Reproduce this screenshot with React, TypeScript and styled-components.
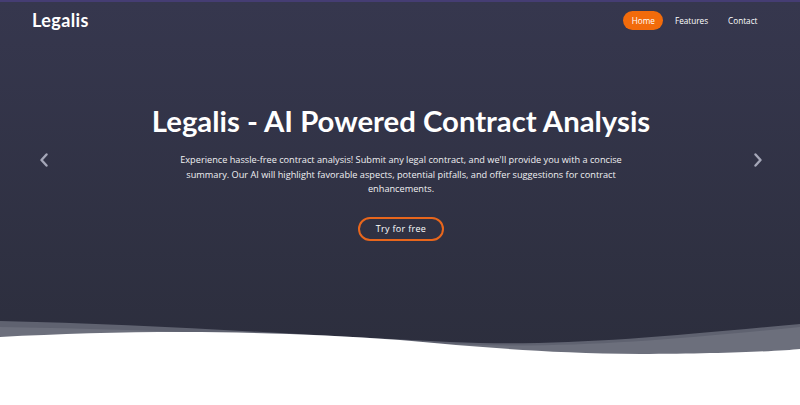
import React from 'react';
import styled, { createGlobalStyle } from 'styled-components';

const GlobalStyle = createGlobalStyle`
    * {
        box-sizing: border-box;
    }
    body {
        margin: 0;
        background: #ffffff;
        font-family: "Open Sans", "Liberation Sans", sans-serif;
    }
`

const Hero = styled.section`
    position: relative;
    height: 355px;
    border-top: 2px solid #453d73;
    background: linear-gradient(180deg, #36374e 0%, #2c2e3d 100%);
    display: flex;
    flex-direction: column;
    overflow: hidden;
`

const Header = styled.header`
    display: flex;
    align-items: center;
    justify-content: space-between;
    padding: 0 34px 0 32px;
    height: 36px;
`

const Logo = styled.a`
    font-family: Lato, "Open Sans", sans-serif;
    font-weight: 700;
    font-size: 18px;
    color: #ffffff;
    letter-spacing: 0.4px;
    text-decoration: none;
`

const Nav = styled.nav`
    display: flex;
    align-items: center;
`

const NavLink = styled.a<{ $active?: boolean }>`
    font-size: 8.2px;
    color: #ffffff;
    text-decoration: none;
    padding: 4px 8.5px;
    margin-left: 3px;
    border-radius: 50px;
    background: ${p => (p.$active ? '#f26b0b' : 'transparent')};
`

const Slide = styled.div`
    height: 244px;
    display: flex;
    align-items: center;
    justify-content: space-between;
    padding: 0 34px 0 36px;
`

const Arrow = styled.button`
    width: 16px;
    height: 24px;
    padding: 0;
    border: none;
    background: transparent;
    display: flex;
    align-items: center;
    justify-content: center;
    color: #a5a7b8;
`

const Content = styled.div`
    flex: 1;
    align-self: flex-start;
    margin-top: 66px;
    display: flex;
    flex-direction: column;
    align-items: center;
    text-align: center;
`

const Title = styled.h2`
    margin: 0 0 15px;
    font-family: Lato, "Open Sans", sans-serif;
    font-weight: 700;
    font-size: 29.3px;
    line-height: 34px;
    color: #ffffff;
`

const Text = styled.p`
    margin: 0 0 20px;
    max-width: 476px;
    font-size: 9.2px;
    line-height: 14.5px;
    color: #f0f0f2;
`

const CtaButton = styled.a`
    display: inline-flex;
    align-items: center;
    justify-content: center;
    width: 86px;
    height: 24px;
    border: 2px solid #e8661c;
    border-radius: 50px;
    font-size: 9px;
    font-weight: 500;
    letter-spacing: 0.3px;
    color: #ffffff;
    text-decoration: none;
`

const Waves = styled.svg`
    position: absolute;
    left: 0;
    bottom: 0;
    width: 100%;
    height: 40px;
    display: block;
`

const Below = styled.section`
    height: 50px;
    background: #ffffff;
`

const Chevron = ({ dir }: { dir: 'left' | 'right' }) => (
    <svg width="10" height="14" viewBox="0 0 10 14" fill="none">
        <path
            d={dir === 'left' ? 'M7.5 1.5 L2.5 7 L7.5 12.5' : 'M2.5 1.5 L7.5 7 L2.5 12.5'}
            stroke="currentColor"
            strokeWidth="2.4"
            strokeLinecap="round"
            strokeLinejoin="round"
        />
    </svg>
)

function App() {
    return (
        <>
            <GlobalStyle />
            <Hero>
                <Header>
                    <Logo href="#">Legalis</Logo>
                    <Nav>
                        <NavLink $active href="#">Home</NavLink>
                        <NavLink href="#">Features</NavLink>
                        <NavLink href="#">Contact</NavLink>
                    </Nav>
                </Header>

                <Slide>
                    <Arrow aria-label="Previous">
                        <Chevron dir="left" />
                    </Arrow>
                    <Content>
                        <Title>Legalis - AI Powered Contract Analysis</Title>
                        <Text>
                            Experience hassle-free contract analysis! Submit any legal contract, and we'll provide you
                            with a concise summary. Our AI will highlight favorable aspects, potential pitfalls, and
                            offer suggestions for contract enhancements.
                        </Text>
                        <CtaButton href="#">Try for free</CtaButton>
                    </Content>
                    <Arrow aria-label="Next">
                        <Chevron dir="right" />
                    </Arrow>
                </Slide>

                <Waves viewBox="0 0 800 40" preserveAspectRatio="none">
                    <path d="M0,6 C150,9 300,20 450,27 C560,32 660,22 800,9 V40 H0 Z" fill="#5f6270" />
                    <path d="M0,12 C150,14 300,22 450,29 C560,34 660,26 800,12 V40 H0 Z" fill="#6c6f7c" />
                    <path d="M0,22 C120,16 250,14 400,25 C480,32 540,38 640,39 C720,39 780,36 800,34 V40 H0 Z" fill="#ffffff" />
                </Waves>
            </Hero>
            <Below />
        </>
    );
}

export default App;
